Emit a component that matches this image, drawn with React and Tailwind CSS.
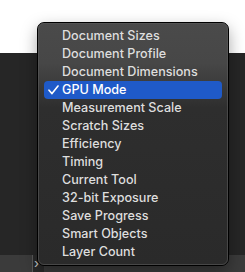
import React from "react";

const items = [
  "Document Sizes",
  "Document Profile",
  "Document Dimensions",
  "GPU Mode",
  "Measurement Scale",
  "Scratch Sizes",
  "Efficiency",
  "Timing",
  "Current Tool",
  "32-bit Exposure",
  "Save Progress",
  "Smart Objects",
  "Layer Count",
];

function Check() {
  return (
    <svg width="11" height="10" viewBox="0 0 11 10" className="shrink-0">
      <path d="M1 5.2 L4 8.6 L10 1" fill="none" stroke="#ffffff" strokeWidth="1.6" strokeLinecap="round" strokeLinejoin="round" />
    </svg>
  );
}

export default function App() {
  return (
    <div className="relative w-[245px] h-[272px] overflow-hidden bg-[#262626] font-['Inter','Liberation_Sans',sans-serif]">
      <div className="flex flex-col h-full">
        <div className="h-[53px] bg-white" />
        <div className="flex-1 bg-[#262626]" />
        <div className="h-[17px] flex bg-[#3b3b3b]">
          <div className="w-[32px]" />
          <div className="w-[12px] flex items-center pl-[1px] bg-[#2a2a2a] border-l border-[#5a5a5a] text-[#d0d0d0] text-[13px] leading-none">
            ›
          </div>
        </div>
      </div>

      {/* popup menu */}
      <div className="absolute left-[37px] top-[22px] w-[192px] h-[244px] rounded-[7px] border border-black shadow-[0_6px_16px_rgba(0,0,0,0.35)] bg-[linear-gradient(to_bottom,#4a4a4a_0px,#474747_40px,#2e2e2e_85px,#2a2a2a_100%)]">
        <div className="h-full rounded-[6px] border border-[#5c5c5c]/60 pt-[3px] px-[5px]">
          {items.map((item) => {
            const on = item === "GPU Mode";
            return (
              <div
                key={item}
                className={`h-[18px] flex items-center rounded-[4px] ${on ? "bg-[#1f5ac8]" : ""}`}
              >
                <div className="w-[18px] flex justify-center pl-[1px]">{on ? <Check /> : null}</div>
                <span className={`text-[12.6px] leading-none font-medium ${on ? "text-white" : "text-[#dedede]"}`}>
                  {item}
                </span>
              </div>
            );
          })}
        </div>
      </div>
    </div>
  );
}
